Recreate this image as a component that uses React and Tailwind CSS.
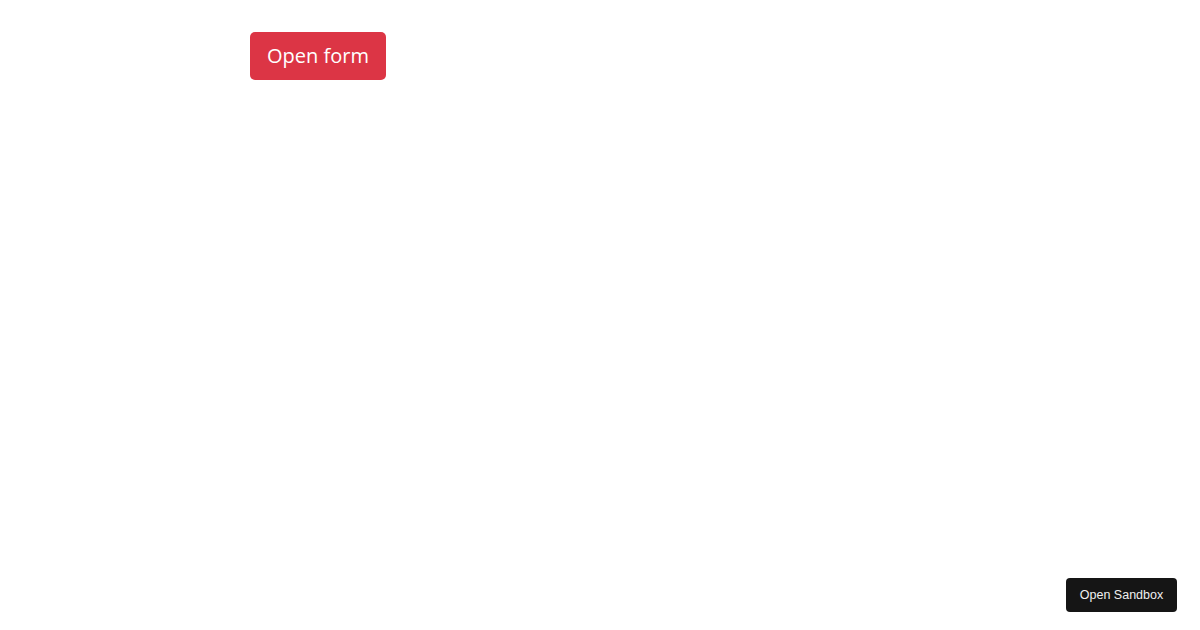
export default function App() {
  return (
    <div className="relative w-[1200px] h-[630px] bg-white overflow-hidden">
      <div className="pt-8 pl-[250px]">
        <button className="w-[136px] h-12 rounded-[5px] bg-[#dc3545] text-white text-[20px] leading-[30px] font-['Open_Sans',sans-serif]">
          Open form
        </button>
      </div>
      <div className="absolute right-[23px] bottom-[18px] w-[111px] h-[34px] flex items-center justify-center rounded-[4px] bg-[#151515] text-[#f0f0f0] text-[12.5px] font-['Liberation_Sans',Arial,sans-serif]">
        Open Sandbox
      </div>
    </div>
  );
}
